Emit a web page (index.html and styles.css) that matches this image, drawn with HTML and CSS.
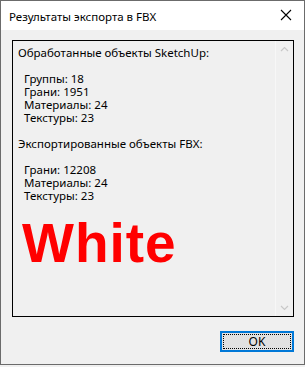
FILE: index.html
```html
<!DOCTYPE html>
<html lang="ru">
<head>
<meta charset="utf-8">
<title>Результаты экспорта в FBX</title>
<link rel="stylesheet" href="styles.css">
</head>
<body>
<div class="window">
  <div class="titlebar">
    <span class="title">Результаты экспорта в FBX</span>
    <svg class="close" width="12" height="12" viewBox="0 0 12 12"><path d="M1 1 L11 11 M11 1 L1 11" stroke="#000" stroke-width="1.1" fill="none"/></svg>
  </div>
  <div class="client">
    <div class="textbox">
      <div class="text">
        <div class="line">Обработанные объекты SketchUp:</div>
        <div class="line blank"></div>
        <div class="line ind">Группы: 18</div>
        <div class="line ind">Грани: 1951</div>
        <div class="line ind">Материалы: 24</div>
        <div class="line ind">Текстуры: 23</div>
        <div class="line blank"></div>
        <div class="line">Экспортированные объекты FBX:</div>
        <div class="line blank"></div>
        <div class="line ind">Грани: 12208</div>
        <div class="line ind">Материалы: 24</div>
        <div class="line ind">Текстуры: 23</div>
        <div class="big">White</div>
      </div>
      <div class="scrollbar">
        <svg width="17" height="17" viewBox="0 0 17 17"><path d="M5 10 L8.5 6.5 L12 10" stroke="#c8c8c8" stroke-width="1.2" fill="none"/></svg>
        <div class="track"></div>
        <svg width="17" height="17" viewBox="0 0 17 17"><path d="M5 7 L8.5 10.5 L12 7" stroke="#c8c8c8" stroke-width="1.2" fill="none"/></svg>
      </div>
    </div>
    <div class="footer">
      <button class="ok"><span class="focus">OK</span></button>
    </div>
  </div>
</div>
</body>
</html>
```
FILE: styles.css
```css
html, body {
  margin: 0;
  padding: 0;
  background: #f0f0f0;
}
.window {
  box-sizing: border-box;
  width: 305px;
  height: 365px;
  border: 1px solid #6b6b6b;
  display: flex;
  flex-direction: column;
  font-family: "Noto Sans", sans-serif;
  font-size: 12px;
  color: #000;
}
.titlebar {
  height: 29px;
  background: #fff;
  display: flex;
  align-items: center;
  justify-content: space-between;
  padding: 0 12px 0 8px;
}
.title {
  font-size: 11.5px;
  color: #000;
  padding-top: 1px;
}
.close {
  display: block;
  margin-top: -1px;
}
.client {
  flex: 1;
  background: #f0f0f0;
  padding: 10px 10px 12px 11px;
  display: flex;
  flex-direction: column;
}
.textbox {
  height: 277px;
  box-sizing: border-box;
  border: 1px solid #000;
  background: #f0f0f0;
  display: flex;
}
.text {
  flex: 1;
  padding: 5px 0 0 5px;
  line-height: 13px;
  font-size: 11.5px;
  color: #000;
}
.line {
  height: 13px;
  white-space: pre;
}
.ind {
  padding-left: 6px;
}
.big {
  font-family: "Liberation Sans", sans-serif;
  font-weight: bold;
  font-size: 55px;
  line-height: 55px;
  letter-spacing: 1px;
  color: #ff0000;
  margin-top: 14px;
  padding-left: 4px;
}
.scrollbar {
  width: 17px;
  display: flex;
  flex-direction: column;
  border-left: 1px solid #f7f7f7;
  background: #f0f0f0;
}
.scrollbar svg {
  display: block;
}
.track {
  flex: 1;
}
.footer {
  display: flex;
  justify-content: flex-end;
  margin-top: 14px;
}
.ok {
  box-sizing: border-box;
  width: 74px;
  height: 21px;
  border: 2px solid #0078d7;
  background: #e1e1e1;
  padding: 1px;
  margin: 0;
  font-family: "Noto Sans", sans-serif;
  font-size: 12px;
  color: #000;
  display: flex;
}
.focus {
  flex: 1;
  border: 1px dotted #000;
  display: flex;
  align-items: center;
  justify-content: center;
  line-height: 13px;
}
```
